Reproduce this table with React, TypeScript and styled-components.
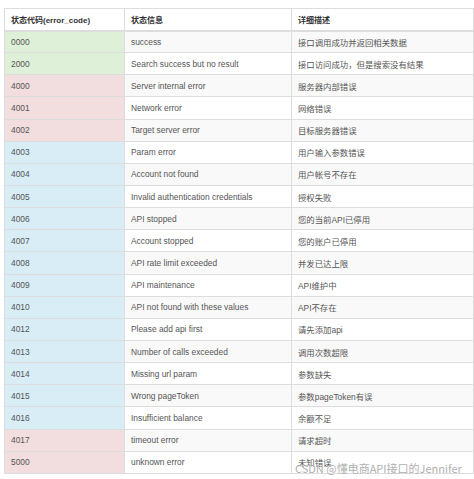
import React from "react";
import styled, { createGlobalStyle } from "styled-components";

const Global = createGlobalStyle`
  html, body { margin: 0; padding: 0; background: #ffffff; }
  body { font-family: "Liberation Sans", Arial, "Noto Sans CJK SC", sans-serif; }
`;

type Tone = "green" | "red" | "blue";

const toneColor: Record<Tone, string> = {
  green: "#dff0d8",
  red: "#f2dede",
  blue: "#d9edf7",
};

const Page = styled.div`
  position: relative;
  width: 474px;
  height: 479px;
  padding: 8px 0 0 4px;
  box-sizing: border-box;
  overflow: hidden;
`;

const Table = styled.table`
  border-collapse: collapse;
  table-layout: fixed;
  width: 469px;
  border: 1px solid #dddddd;
  font-family: "Liberation Sans", Arial, "Noto Sans CJK SC", sans-serif;
  font-size: 8.4px;
  color: #555555;
`;

const HeadCell = styled.th<{ $w: number }>`
  width: ${(p) => p.$w}px;
  height: 22px;
  padding: 0 6px;
  text-align: left;
  font-size: 8px;
  font-weight: bold;
  color: #333333;
  border: 1px solid #dddddd;
  border-bottom-width: 2px;
  background: #ffffff;
  box-sizing: border-box;
`;

const Row = styled.tr<{ $striped: boolean }>`
  background: ${(p) => (p.$striped ? "#f9f9f9" : "#ffffff")};
`;

const Cell = styled.td<{ $tone?: Tone }>`
  height: 22.15px;
  padding: 0 6px;
  border: 1px solid #dddddd;
  background: ${(p) => (p.$tone ? toneColor[p.$tone] : "transparent")};
  white-space: nowrap;
  overflow: hidden;
  box-sizing: border-box;
`;

const Watermark = styled.div`
  position: absolute;
  left: 295px;
  top: 462px;
  font-family: "Noto Sans CJK SC", "Liberation Sans", sans-serif;
  font-size: 11px;
  line-height: 13px;
  color: rgba(165, 165, 165, 0.9);
  text-shadow: 0 0 1px rgba(255, 255, 255, 0.9);
  white-space: nowrap;
`;

const rows: [string, string, string, Tone][] = [
  ["0000", "success", "接口调用成功并返回相关数据", "green"],
  ["2000", "Search success but no result", "接口访问成功，但是搜索没有结果", "green"],
  ["4000", "Server internal error", "服务器内部错误", "red"],
  ["4001", "Network error", "网络错误", "red"],
  ["4002", "Target server error", "目标服务器错误", "red"],
  ["4003", "Param error", "用户输入参数错误", "blue"],
  ["4004", "Account not found", "用户帐号不存在", "blue"],
  ["4005", "Invalid authentication credentials", "授权失败", "blue"],
  ["4006", "API stopped", "您的当前API已停用", "blue"],
  ["4007", "Account stopped", "您的账户已停用", "blue"],
  ["4008", "API rate limit exceeded", "并发已达上限", "blue"],
  ["4009", "API maintenance", "API维护中", "blue"],
  ["4010", "API not found with these values", "API不存在", "blue"],
  ["4012", "Please add api first", "请先添加api", "blue"],
  ["4013", "Number of calls exceeded", "调用次数超限", "blue"],
  ["4014", "Missing url param", "参数缺失", "blue"],
  ["4015", "Wrong pageToken", "参数pageToken有误", "blue"],
  ["4016", "Insufficient balance", "余额不足", "blue"],
  ["4017", "timeout error", "请求超时", "red"],
  ["5000", "unknown error", "未知错误", "red"],
];

export default function App() {
  return (
    <>
      <Global />
      <Page>
        <Table>
          <thead>
            <tr>
              <HeadCell $w={120}>状态代码(error_code)</HeadCell>
              <HeadCell $w={167}>状态信息</HeadCell>
              <HeadCell $w={182}>详细描述</HeadCell>
            </tr>
          </thead>
          <tbody>
            {rows.map(([code, info, desc, tone], i) => (
              <Row key={code} $striped={i % 2 === 0}>
                <Cell $tone={tone}>{code}</Cell>
                <Cell>{info}</Cell>
                <Cell>{desc}</Cell>
              </Row>
            ))}
          </tbody>
        </Table>
        <Watermark>CSDN @懂电商API接口的Jennifer</Watermark>
      </Page>
    </>
  );
}
